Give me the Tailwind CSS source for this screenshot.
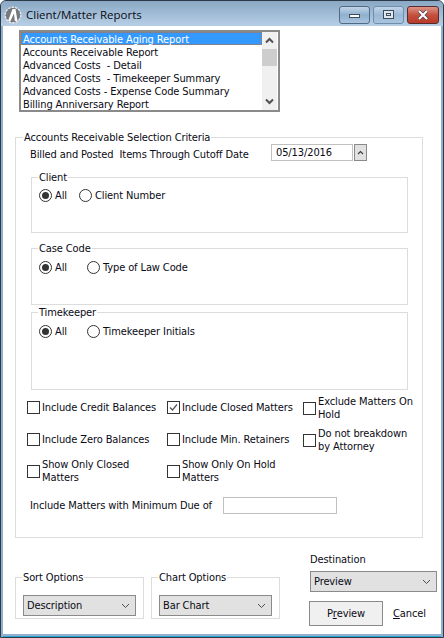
<!DOCTYPE html>
<html lang="en">
<head>
  <meta charset="UTF-8" />
  <title>Client/Matter Reports</title>
  <script src="https://cdn.jsdelivr.net/npm/@tailwindcss/browser@4"></script>
</head>
<body class="bg-white">
  <div class="w-[444px] h-[638px] overflow-hidden flex flex-col rounded-t-[6px] border border-[#2b3a46] bg-[#8fb0cf] font-['DejaVu_Sans_Condensed','Liberation_Sans',sans-serif] text-[11px] leading-[13px] tracking-[-0.11px] text-[#0a0a14]">

    <!-- title bar -->
    <div class="h-[25px] shrink-0 flex items-center pl-[3px] pr-[4px] bg-gradient-to-b from-[#8aa8c4] to-[#b7cfe6]">
      <svg class="w-[18px] h-[18px] shrink-0 mt-[2px]" viewBox="0 0 18 18">
        <circle cx="9" cy="9" r="7.8" fill="#75797d" stroke="#e8e8e8" stroke-width="1.4" stroke-dasharray="2.5 1"/>
        <path d="M4 15 L8.5 3 L11.5 3 L13.5 15 L10.8 15 L10 7.5 L6.5 15 Z" fill="#fff"/>
      </svg>
      <span class="ml-[4px] mt-[2px] text-[11.5px] tracking-normal font-['Open_Sans',sans-serif] text-[#0b0b14]">Client/Matter Reports</span>
      <div class="ml-auto flex gap-[3px] mt-[2px]">
        <div class="w-[31px] h-[18px] rounded-[3px] border border-[#4f6a85] bg-gradient-to-b from-[#c3d5e7] via-[#8fb0cf] to-[#aac4de] flex items-center justify-center pt-[3px]">
          <div class="w-[11px] h-[4px] bg-white border border-[#3d4c5c]"></div>
        </div>
        <div class="w-[31px] h-[18px] rounded-[3px] border border-[#6f8eab] bg-gradient-to-b from-[#c3d5e7] via-[#9ab9d6] to-[#aac4de] flex items-center justify-center">
          <div class="w-[11px] h-[9px] border border-[#3d4c5c] bg-[#dfe8f0] flex items-center justify-center"><div class="w-[5px] h-[3px] border border-[#3d4c5c]"></div></div>
        </div>
        <div class="w-[32px] h-[18px] rounded-[3px] border border-[#5a2a2a] bg-gradient-to-b from-[#dc9488] via-[#c4503e] to-[#b83a28] flex items-center justify-center">
          <svg class="w-[12px] h-[10px]" viewBox="0 0 12 10"><path d="M2 1 L10 9 M10 1 L2 9" stroke="#3d3d3d" stroke-width="3.4"/><path d="M2 1 L10 9 M10 1 L2 9" stroke="#fff" stroke-width="2.2"/></svg>
        </div>
      </div>
    </div>

    <!-- client area -->
    <div class="flex-1 mx-[2px] mb-[2px] bg-white pt-[4px] pl-[16px]">
      <!-- report list -->
      <div class="w-[261px] h-[82px] border-2 border-[#8a8a8a] flex overflow-hidden">
        <div class="w-[241px] leading-[15px]">
          <div class="h-[13px] bg-[#3399ff] text-white border border-dotted border-[#d2691e] pl-[1px] leading-[13px]">Accounts Receivable Aging Report</div>
          <div class="h-[13px] pl-[2px]">Accounts Receivable Report</div>
          <div class="h-[13px] pl-[2px]">Advanced Costs&nbsp; - Detail</div>
          <div class="h-[13px] pl-[2px]">Advanced Costs&nbsp; - Timekeeper Summary</div>
          <div class="h-[13px] pl-[2px]">Advanced Costs - Expense Code Summary</div>
          <div class="h-[13px] pl-[2px]">Billing Anniversary Report</div>
        </div>
        <div class="w-[15px] ml-auto mr-[1px] bg-[#f0f0f0] flex flex-col">
          <div class="h-[17px] flex items-center justify-center"><svg class="w-[9px] h-[7px]" viewBox="0 0 9 7"><path d="M1 5.5 L4.5 2 L8 5.5" fill="none" stroke="#505050" stroke-width="2"/></svg></div>
          <div class="h-[17px] bg-[#cdcdcd]"></div>
          <div class="flex-1"></div>
          <div class="h-[17px] flex items-center justify-center"><svg class="w-[9px] h-[7px]" viewBox="0 0 9 7"><path d="M1 1.5 L4.5 5 L8 1.5" fill="none" stroke="#505050" stroke-width="2"/></svg></div>
        </div>
      </div>

      <!-- selection criteria -->
      <fieldset class="mt-[19px] ml-[-4px] w-[408px] h-[407px] border border-[#dcdcdc] pl-[15px]">
        <legend class="ml-[-8px] px-[1px]">Accounts Receivable Selection Criteria</legend>
        <div class="flex items-start h-[27px] ml-[-1px]">
          <span class="mt-[4px] w-[241px]">Billed and Posted&nbsp; Items Through Cutoff Date</span>
          <div class="w-[82px] h-[17px] border border-[#c0c0c0] pl-[4px] leading-[16px]">05/13/2016</div>
          <div class="ml-[1px] w-[13px] h-[17px] border border-[#8a8a8a] bg-[#e1e1e1] flex items-center justify-center"><svg class="w-[7px] h-[5px]" viewBox="0 0 7 5"><path d="M1 4 L3.5 1.5 L6 4" fill="none" stroke="#404040" stroke-width="1.2"/></svg></div>
        </div>

        <fieldset class="w-[377px] h-[62px] border border-[#dcdcdc] pl-[7px] pt-[4px]">
          <legend class="ml-[-1px] px-[1px]">Client</legend>
          <div class="flex items-center h-[15px]">
            <span class="w-[13px] h-[13px] rounded-full border border-[#333] flex items-center justify-center"><span class="w-[7px] h-[7px] rounded-full bg-[#333]"></span></span>
            <span class="ml-[3px] w-[24px]">All</span>
            <span class="w-[13px] h-[13px] rounded-full border border-[#333]"></span>
            <span class="ml-[3px]">Client Number</span>
          </div>
        </fieldset>

        <fieldset class="mt-[9px] w-[377px] h-[63px] border border-[#dcdcdc] pl-[7px] pt-[5px]">
          <legend class="ml-[-1px] px-[1px]">Case Code</legend>
          <div class="flex items-center h-[15px]">
            <span class="w-[13px] h-[13px] rounded-full border border-[#333] flex items-center justify-center"><span class="w-[7px] h-[7px] rounded-full bg-[#333]"></span></span>
            <span class="ml-[3px] w-[32px]">All</span>
            <span class="w-[13px] h-[13px] rounded-full border border-[#333]"></span>
            <span class="ml-[3px]">Type of Law Code</span>
          </div>
        </fieldset>

        <fieldset class="mt-[1px] w-[377px] h-[84px] border border-[#dcdcdc] pl-[7px] pt-[5px]">
          <legend class="ml-[-1px] px-[1px]">Timekeeper</legend>
          <div class="flex items-center h-[15px]">
            <span class="w-[13px] h-[13px] rounded-full border border-[#333] flex items-center justify-center"><span class="w-[7px] h-[7px] rounded-full bg-[#333]"></span></span>
            <span class="ml-[3px] w-[32px]">All</span>
            <span class="w-[13px] h-[13px] rounded-full border border-[#333]"></span>
            <span class="ml-[3px]">Timekeeper Initials</span>
          </div>
        </fieldset>

        <!-- include options -->
        <div class="grid grid-cols-[140px_136px_110px] grid-rows-[32px_26px_33px] ml-[-4px] mt-[10px] whitespace-nowrap">
          <div class="flex items-center gap-[2px] h-[13px] mt-[1px]"><span class="w-[13px] h-[13px] border border-[#333]"></span>Include Credit Balances</div>
          <div class="flex items-center gap-[2px] h-[13px] mt-[1px]">
            <span class="w-[13px] h-[13px] border border-[#333] flex items-center justify-center"><svg class="w-[9px] h-[9px]" viewBox="0 0 9 9"><path d="M1 4.5 L3.5 7 L8 1.5" fill="none" stroke="#555" stroke-width="1.2"/></svg></span>Include Closed Matters
          </div>
          <div class="flex items-center gap-[2px] h-[26px] mt-[-5px]"><span class="w-[13px] h-[13px] shrink-0 border border-[#333]"></span><span>Exclude Matters On<br>Hold</span></div>

          <div class="flex items-center gap-[2px] h-[13px] mt-[1px]"><span class="w-[13px] h-[13px] border border-[#333]"></span>Include Zero Balances</div>
          <div class="flex items-center gap-[2px] h-[13px] mt-[1px]"><span class="w-[13px] h-[13px] border border-[#333]"></span>Include Min. Retainers</div>
          <div class="flex items-center gap-[2px] h-[26px] mt-[-5px]"><span class="w-[13px] h-[13px] shrink-0 border border-[#333]"></span><span>Do not breakdown<br>by Attorney</span></div>

          <div class="flex items-center gap-[2px] h-[26px]"><span class="w-[13px] h-[13px] shrink-0 border border-[#333]"></span><span>Show Only Closed<br>Matters</span></div>
          <div class="flex items-center gap-[2px] h-[26px]"><span class="w-[13px] h-[13px] shrink-0 border border-[#333]"></span><span>Show Only On Hold<br>Matters</span></div>
        </div>

        <div class="flex items-center ml-[-1px] mt-[6px]">
          <span class="w-[193px]">Include Matters with Minimum Due of</span>
          <div class="w-[114px] h-[17px] border border-[#c0c0c0]"></div>
        </div>
      </fieldset>

      <!-- bottom row -->
      <div class="flex items-start ml-[-4px]">
        <fieldset class="mt-[33px] w-[129px] h-[48px] border border-[#dcdcdc] px-[7px]">
          <legend class="ml-[-1px] px-[1px]">Sort Options</legend>
          <div class="mt-[11px] h-[21px] bg-[#e1e1e1] border border-[#8a8a8a] flex items-center pl-[3px] pr-[5px] justify-between">Description<svg class="w-[9px] h-[6px]" viewBox="0 0 9 6"><path d="M1 1 L4.5 4.5 L8 1" fill="none" stroke="#505050" stroke-width="1"/></svg></div>
        </fieldset>
        <fieldset class="mt-[33px] ml-[7px] w-[129px] h-[48px] border border-[#dcdcdc] px-[7px]">
          <legend class="ml-[-1px] px-[1px]">Chart Options</legend>
          <div class="mt-[11px] h-[21px] bg-[#e1e1e1] border border-[#8a8a8a] flex items-center pl-[3px] pr-[5px] justify-between">Bar Chart<svg class="w-[9px] h-[6px]" viewBox="0 0 9 6"><path d="M1 1 L4.5 4.5 L8 1" fill="none" stroke="#505050" stroke-width="1"/></svg></div>
        </fieldset>
        <div class="ml-[29px] mt-[15px] w-[128px]">
          <div class="pl-[1px]">Destination</div>
          <div class="mt-[5px] h-[21px] ml-[1px] w-[127px] bg-[#e1e1e1] border border-[#8a8a8a] flex items-center pl-[3px] pr-[5px] justify-between">Preview<svg class="w-[9px] h-[6px]" viewBox="0 0 9 6"><path d="M1 1 L4.5 4.5 L8 1" fill="none" stroke="#505050" stroke-width="1"/></svg></div>
          <div class="mt-[9px] flex items-center">
            <div class="w-[74px] h-[25px] border border-[#8a8a8a] bg-[#f0f0f0] flex items-center justify-center">P<span class="underline">r</span>eview</div>
            <span class="ml-[10px]"><span class="underline">C</span>ancel</span>
          </div>
        </div>
      </div>
    </div>
    <div class="h-[1px] bg-[#2ba7d0] mx-[2px]"></div>
  </div>
</body>
</html>
